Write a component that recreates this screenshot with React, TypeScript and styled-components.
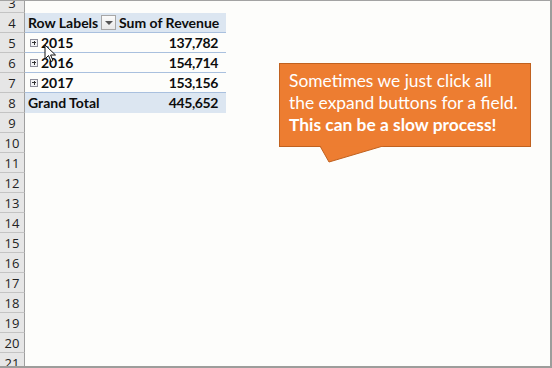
import React from 'react'
import styled, { createGlobalStyle } from 'styled-components'

const GlobalStyle = createGlobalStyle`
  html, body {
    margin: 0;
    padding: 0;
    background: #ffffff;
  }
`

type Tone = 'plain' | 'header' | 'item' | 'total'

const Frame = styled.div`
  position: relative;
  width: 552px;
  height: 368px;
  box-sizing: border-box;
  border-top: 1px solid #a3a3a3;
  border-right: 2px solid #9d9d9b;
  border-bottom: 2px solid #9d9d9b;
  background: #fdfdfb;
  overflow: hidden;
`

const Sheet = styled.div`
  display: flex;
  flex-direction: column;
  margin-top: -8px;
`

const Row = styled.div`
  display: flex;
  height: 20px;
  flex: none;
`

const RowHead = styled.div`
  width: 25px;
  flex: none;
  box-sizing: border-box;
  display: flex;
  align-items: center;
  justify-content: center;
  background: #e6e6e6;
  border-bottom: 1px solid #c3c3c3;
  border-right: 1px solid #9f9f9f;
  font-family: 'Open Sans', 'Liberation Sans', sans-serif;
  font-size: 13px;
  color: #222;
  padding-top: 1px;
`

const toneBg: Record<Tone, string> = {
  plain: 'transparent',
  header: '#dce6f1',
  item: 'transparent',
  total: '#dce6f1',
}

const PivotLine = styled.div<{ $tone: Tone }>`
  display: flex;
  width: 201px;
  flex: none;
  box-sizing: border-box;
  background: ${(p) => toneBg[p.$tone]};
  border-bottom: 1px solid
    ${(p) => (p.$tone === 'plain' || p.$tone === 'total' ? 'transparent' : '#a9c0de')};
  font-family: Lato, 'Open Sans', sans-serif;
  font-weight: 700;
  font-size: 14px;
  color: #0d0d0d;
  white-space: nowrap;
`

const LabelCell = styled.div`
  width: 91px;
  flex: none;
  display: flex;
  align-items: center;
  padding-left: 3px;
  box-sizing: border-box;
  gap: 3px;
`

const ValueCell = styled.div<{ $right?: boolean }>`
  flex: 1;
  display: flex;
  align-items: center;
  justify-content: ${(p) => (p.$right ? 'flex-end' : 'flex-start')};
  padding-right: 8px;
  padding-left: 3px;
  box-sizing: border-box;
  letter-spacing: ${(p) => (p.$right ? '-0.4px' : '0')};
`

const DropButton = styled.span`
  width: 16px;
  height: 15px;
  margin-left: auto;
  box-sizing: border-box;
  border: 1px solid #a7a7a7;
  background: linear-gradient(#fbfbfb, #e9e9e9);
  display: flex;
  align-items: center;
  justify-content: center;
`

const Caret = styled.span`
  width: 0;
  height: 0;
  border-left: 4px solid transparent;
  border-right: 4px solid transparent;
  border-top: 4px solid #555;
`

const Expander = styled.span`
  width: 8px;
  height: 8px;
  box-sizing: border-box;
  border: 1px solid #8e8e9a;
  background: #f3f3f6;
  position: relative;
  flex: none;
  margin-left: 2px;
  &::before,
  &::after {
    content: '';
    position: absolute;
    background: #333;
  }
  &::before {
    left: 1px;
    right: 1px;
    top: 2.5px;
    height: 1px;
  }
  &::after {
    top: 1px;
    bottom: 1px;
    left: 2.5px;
    width: 1px;
  }
`

const Callout = styled.div`
  position: absolute;
  left: 279px;
  top: 62px;
  width: 252px;
  height: 84px;
  box-sizing: border-box;
  background: #ed7d31;
  border: 1px solid #c0611f;
  padding: 6px 0 0 9px;
  font-family: Lato, 'Open Sans', sans-serif;
  font-size: 17.4px;
  line-height: 22px;
  color: #ffffff;
  white-space: nowrap;
  & b {
    font-weight: 700;
  }
`

const Tail = styled.svg`
  position: absolute;
  left: 40px;
  top: 81px;
`

const Cursor = styled.svg`
  position: absolute;
  left: 44px;
  top: 43px;
`

const pivot: { n: number; tone: Tone; label: string; value: string; expand?: boolean }[] = [
  { n: 4, tone: 'header', label: 'Row Labels', value: 'Sum of Revenue' },
  { n: 5, tone: 'item', label: '2015', value: '137,782', expand: true },
  { n: 6, tone: 'item', label: '2016', value: '154,714', expand: true },
  { n: 7, tone: 'item', label: '2017', value: '153,156', expand: true },
  { n: 8, tone: 'total', label: 'Grand Total', value: '445,652' },
]

const emptyRows = Array.from({ length: 13 }, (_, i) => i + 9)

export default function App() {
  return (
    <>
      <GlobalStyle />
      <Frame>
        <Sheet>
          <Row>
            <RowHead>3</RowHead>
          </Row>
          {pivot.map((r) => (
            <Row key={r.n}>
              <RowHead>{r.n}</RowHead>
              <PivotLine $tone={r.tone}>
                <LabelCell>
                  {r.expand && <Expander />}
                  {r.label}
                  {r.tone === 'header' && (
                    <DropButton>
                      <Caret />
                    </DropButton>
                  )}
                </LabelCell>
                <ValueCell $right={r.tone !== 'header'}>{r.value}</ValueCell>
              </PivotLine>
            </Row>
          ))}
          {emptyRows.map((n) => (
            <Row key={n}>
              <RowHead>{n}</RowHead>
            </Row>
          ))}
        </Sheet>

        <Cursor width="13" height="20" viewBox="0 0 13 20">
          <path
            d="M1 1 L1 15 L4.5 11.5 L7 17.5 L9 16.6 L6.6 11 L11.5 11 Z"
            fill="#ffffff"
            stroke="#111"
            strokeWidth="1"
            strokeLinejoin="round"
          />
        </Cursor>

        <Callout>
          Sometimes we just click all
          <br />
          the expand buttons for a field.
          <br />
          <b>This can be a slow process!</b>
          <Tail width="65" height="18" viewBox="0 0 65 18">
            <path d="M0 1 L9 17 L63 1" fill="#ed7d31" stroke="#c0611f" strokeWidth="1" />
            <rect x="0.5" y="0" width="63" height="1.2" fill="#ed7d31" />
          </Tail>
        </Callout>
      </Frame>
    </>
  )
}
